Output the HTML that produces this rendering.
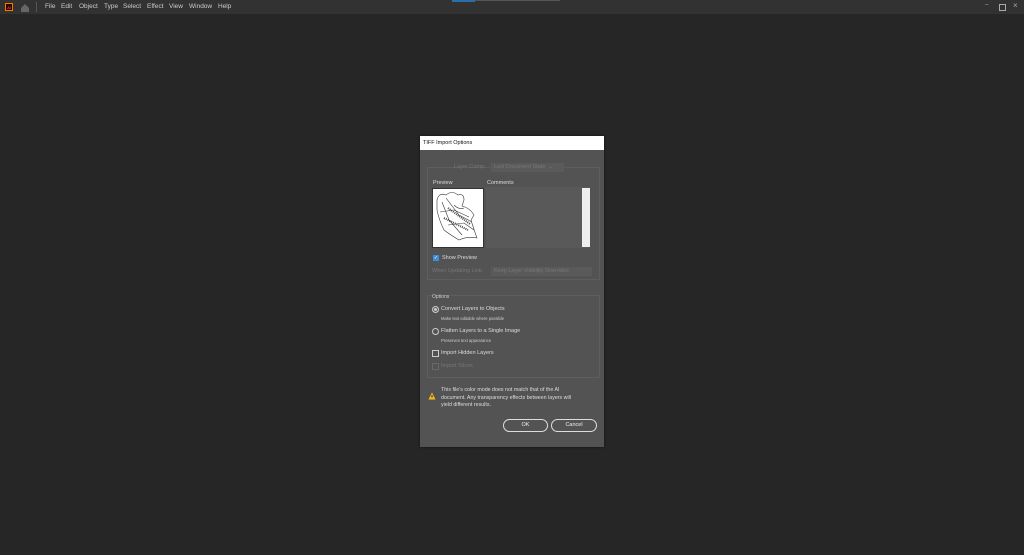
<!DOCTYPE html><html><head><style>
body{margin:0;width:1024px;height:555px;background:#262626;position:relative;overflow:hidden;font-family:"Liberation Sans",sans-serif}
.a{position:absolute}
.mb{left:0;top:0;width:1024px;height:14px;background:#323232}
.mb span{position:absolute;top:3px;font-size:6.5px;color:#ccc}
.dlg{left:420px;top:136px;width:184px;height:311px;background:#535353;box-shadow:0 0 2px #111}
.t{font-size:5.5px;color:#ddd;position:absolute;white-space:nowrap}
.dim{color:#777}
.s{font-size:4.2px;color:#ccc;position:absolute;white-space:nowrap}
.btn{position:absolute;height:11px;border:1px solid #ddd;border-radius:7px;color:#eee;font-size:5.5px;text-align:center;line-height:11px}
.cb{position:absolute;width:5px;height:5px;border:1px solid #ccc}
.rd{position:absolute;width:5px;height:5px;border:1px solid #ccc;border-radius:50%}
</style></head><body>
<div class="a mb">
<div class="a" style="left:5px;top:3px;width:8px;height:8px;background:#300;border:1px solid #f70;color:#f70;font-size:4px;line-height:8px;text-align:center;box-sizing:border-box">Ai</div>
<svg class="a" style="left:20px;top:3px" width="10" height="9"><path d="M1 5L5 1L9 5V9H1Z" fill="#666"/></svg>
<div class="a" style="left:36px;top:2px;width:1px;height:10px;background:#555"></div>
<span style="left:45px">File</span><span style="left:61px">Edit</span><span style="left:79px">Object</span><span style="left:104px">Type</span><span style="left:123px">Select</span><span style="left:147px">Effect</span><span style="left:169px">View</span><span style="left:189px">Window</span><span style="left:218px">Help</span>
<div class="a" style="left:452px;top:0;width:23px;height:2px;background:#2d6ea8"></div>
<div class="a" style="left:475px;top:0;width:85px;height:1px;background:#555"></div>
<span style="left:985px;top:1px;color:#aaa">–</span>
<div class="a" style="left:999px;top:4px;width:5px;height:5px;border:1px solid #aaa"></div>
<span style="left:1013px;top:1px;color:#aaa;font-size:8px">×</span>
</div>
<div class="a dlg">
<div class="a" style="left:0;top:0;width:184px;height:14px;background:#fff"></div>
<div class="t" style="left:3px;top:4px;color:#111">TIFF Import Options</div>
<div class="a" style="left:7px;top:31px;width:171px;height:111px;border:1px solid #5e5e5e"></div>
<div class="t dim" style="left:34px;top:28px">Layer Comp:</div>
<div class="a" style="left:71px;top:27px;width:73px;height:9px;background:#5a5a5a"></div>
<div class="t dim" style="left:74px;top:28px">Last Document State &nbsp;⌄</div>
<div class="t" style="left:13px;top:44px">Preview</div>
<div class="t" style="left:67px;top:44px">Comments</div>
<div class="a" style="left:12px;top:52px;width:50px;height:58px;background:#fff;border:1px solid #333"></div>
<svg class="a" style="left:14px;top:54px" width="47" height="55"><g fill="none" stroke="#333" stroke-width=".6"><path d="M3 10Q5 2 12 5Q18 0 24 5Q30 3 30 10L28 16Q36 18 40 25L37 30Q40 40 43 48Q34 46 25 50Q15 44 10 40Q5 30 3 20Z"/><path d="M8 12L15 30L28 45M12 8L25 25L38 32M6 22L20 20L35 27M14 35L30 33L40 40M20 15Q25 20 30 18" /></g><path d="M14 18L36 34M10 28L34 40" stroke="#444" stroke-width="2" stroke-dasharray="1 1"/></svg>
<div class="a" style="left:66px;top:51px;width:104px;height:61px;background:#595959"></div>
<div class="a" style="left:162px;top:52px;width:8px;height:59px;background:#eee"></div>
<div class="a" style="left:13px;top:119px;width:6px;height:6px;background:#3c8ddb;color:#fff;font-size:5px;line-height:6px;text-align:center">✓</div>
<div class="t" style="left:22px;top:119px">Show Preview</div>
<div class="t dim" style="left:12px;top:132px">When Updating Link:</div>
<div class="a" style="left:71px;top:131px;width:101px;height:9px;background:#5a5a5a"></div>
<div class="t dim" style="left:74px;top:132px">Keep Layer Visibility Overrides</div>
<div class="a" style="left:7px;top:159px;width:171px;height:81px;border:1px solid #5e5e5e"></div>
<div class="t" style="left:12px;top:158px;font-size:5px;color:#ccc">Options</div>
<div class="rd" style="left:12px;top:170px;background:#ccc;box-shadow:inset 0 0 0 1px #535353"></div>
<div class="t" style="left:21px;top:170px">Convert Layers to Objects</div>
<div class="s" style="left:21px;top:180px">Make text editable where possible</div>
<div class="rd" style="left:12px;top:192px"></div>
<div class="t" style="left:21px;top:192px">Flatten Layers to a Single Image</div>
<div class="s" style="left:21px;top:202px">Preserves text appearance</div>
<div class="cb" style="left:12px;top:214px"></div>
<div class="t" style="left:21px;top:214px">Import Hidden Layers</div>
<div class="cb" style="left:12px;top:227px;border-color:#6a6a6a"></div>
<div class="t dim" style="left:21px;top:227px">Import Slices</div>
<svg class="a" style="left:8px;top:256px" width="8" height="8"><path d="M4 0.5L7.5 7.5H0.5Z" fill="#f0c020"/><path d="M4 3V5.5" stroke="#000" stroke-width=".8"/></svg>
<div class="t" style="left:21px;top:251px;line-height:7.5px;font-size:5.3px">This file's color mode does not match that of the AI<br>document. Any transparency effects between layers will<br>yield different results.</div>
<div class="btn" style="left:83px;top:283px;width:43px">OK</div>
<div class="btn" style="left:131px;top:283px;width:44px">Cancel</div>
</div>
</body></html>
